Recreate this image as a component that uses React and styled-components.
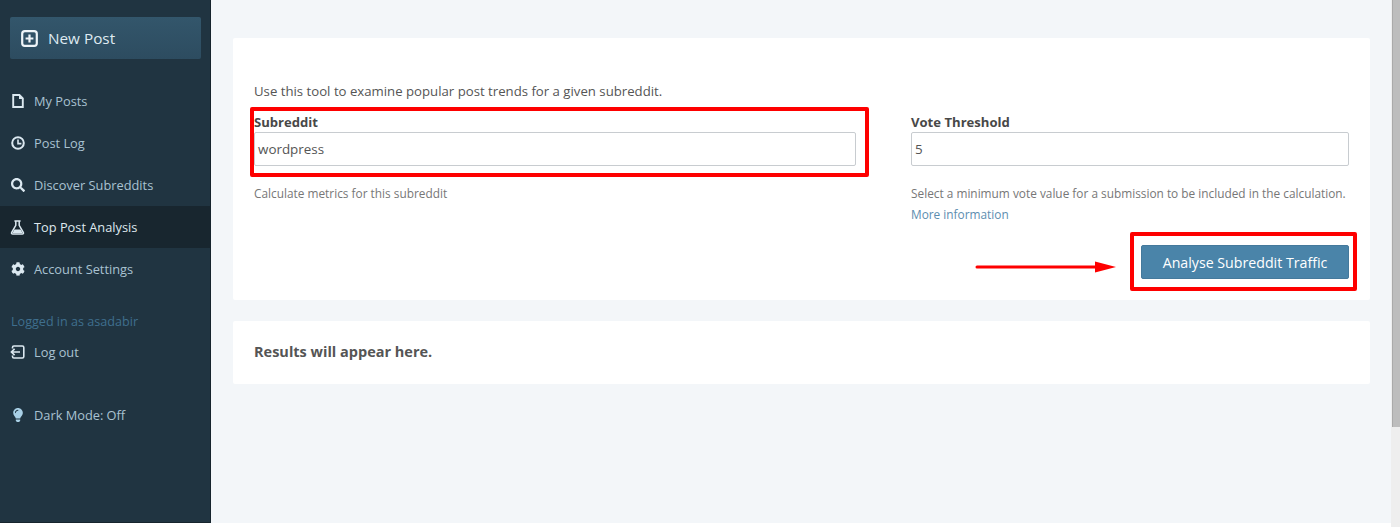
import React from 'react';
import styled, { createGlobalStyle } from 'styled-components';
import { FaSearch, FaCog, FaLightbulb } from 'react-icons/fa';

const GlobalStyle = createGlobalStyle`
  html, body {
    margin: 0;
    padding: 0;
    height: 100%;
    overflow: hidden;
    background: #fff;
  }
  body {
    font-family: "Open Sans", "Liberation Sans", sans-serif;
    font-size: 13px;
    color: #555;
  }
`;

const Page = styled.div`
  position: relative;
  display: flex;
  width: 1400px;
  height: 523px;
  background: #f3f6f9;
`;

const Sidebar = styled.aside`
  width: 211px;
  flex: none;
  box-sizing: border-box;
  background: #203441;
  border-right: 1px solid #16242d;
  border-bottom: 1px solid #16242d;
  padding-top: 17px;
`;

const NewPost = styled.a`
  display: flex;
  align-items: center;
  gap: 10px;
  height: 42px;
  margin: 0 9px 21px 10px;
  padding-left: 11px;
  border-radius: 2px;
  background: linear-gradient(#33566b, #2d4c60);
  color: #dfeaf1;
  font-size: 15.3px;
  svg { color: #eef4f8; }
`;

const Nav = styled.nav`
  display: flex;
  flex-direction: column;
`;

const NavItem = styled.a`
  display: flex;
  align-items: center;
  height: 42px;
  padding-left: 10px;
  font-size: 12.8px;
  color: ${p => (p.$active ? '#dfe8ee' : '#a9c2d1')};
  background: ${p => (p.$active ? '#18262f' : 'transparent')};
`;

const IconSlot = styled.span`
  display: flex;
  justify-content: center;
  width: 15px;
  margin-right: 9px;
  font-size: 14px;
  color: ${p => p.$color || '#dbe8f0'};
`;

const LoggedIn = styled.div`
  margin: 22px 0 0 11px;
  font-size: 12.6px;
  line-height: 19px;
  color: #3f6f8e;
`;

const DarkRow = styled(NavItem)`
  margin-top: 21px;
`;

const Main = styled.main`
  flex: none;
  width: 1137px;
  display: flex;
  flex-direction: column;
  gap: 21px;
  padding: 38px 0 0 22px;
`;

const Card = styled.section`
  background: #fff;
  border-radius: 2px;
  padding: ${p => p.$padding};
`;

const Intro = styled.p`
  margin: 0 0 12px;
  font-size: 13.2px;
  line-height: 19px;
  color: #555;
`;

const Columns = styled.div`
  display: grid;
  grid-template-columns: 602px 438px;
  column-gap: 55px;
`;

const Field = styled.div`
  display: flex;
  flex-direction: column;
`;

const Label = styled.label`
  font-size: 13.1px;
  font-weight: 700;
  line-height: 19px;
  color: #484848;
`;

const Input = styled.div`
  box-sizing: border-box;
  height: 34px;
  padding: 0 3px;
  display: flex;
  align-items: center;
  background: #fff;
  border: 1px solid #c8ccd0;
  border-radius: 2px;
  font-size: 13.4px;
  color: #555;
`;

const Help = styled.p`
  margin: 17px 0 0;
  font-size: 11.85px;
  line-height: 21px;
  white-space: nowrap;
  color: #777;
`;

const InfoLink = styled.a`
  display: block;
  color: #5d8eb0;
`;

const Actions = styled.div`
  display: flex;
  justify-content: flex-end;
  margin-top: 20px;
`;

const Button = styled.button`
  width: 208px;
  height: 34px;
  padding: 0;
  border: 1px solid #44799c;
  border-radius: 2px;
  background: #4a84a9;
  color: #fff;
  font-family: inherit;
  font-size: 14.2px;
  font-weight: 500;
`;

const Results = styled.h3`
  margin: 0;
  font-size: 14.5px;
  line-height: 19px;
  font-weight: 700;
  color: #555;
`;

const RedBox = styled.div`
  position: absolute;
  box-sizing: border-box;
  left: ${p => p.$x}px;
  top: ${p => p.$y}px;
  width: ${p => p.$w}px;
  height: ${p => p.$h}px;
  border: 4px solid #fe0000;
  border-radius: 2px;
  pointer-events: none;
`;

const Arrow = styled.svg`
  position: absolute;
  left: 975px;
  top: 259px;
`;

const Scrollbar = styled.div`
  position: absolute;
  top: 0;
  right: 0;
  bottom: -4px;
  width: 9px;
  background: #eee;
`;

const ScrollThumb = styled.div`
  height: 427px;
  margin-left: 1px;
  background: #bdbdbd;
  border-left: 1px solid #aaa;
  box-sizing: border-box;
`;

const PlusBoxIcon = () => (
  <svg width="17" height="17" viewBox="0 0 17 17">
    <rect x="1.2" y="1.2" width="14.6" height="14.6" rx="2.6" fill="none" stroke="currentColor" strokeWidth="2.2" />
    <path d="M8.5 4.6v7.8M4.6 8.5h7.8" stroke="currentColor" strokeWidth="2.2" />
  </svg>
);

const FileIcon = () => (
  <svg width="12" height="14" viewBox="0 0 12 14">
    <path d="M1.2 1H7.4L10.8 4.4V13H1.2Z" fill="none" stroke="currentColor" strokeWidth="1.9" />
    <path d="M7 1V5H11Z" fill="currentColor" />
  </svg>
);

const ClockIcon = () => (
  <svg width="14" height="14" viewBox="0 0 14 14">
    <circle cx="7" cy="7" r="5.8" fill="none" stroke="currentColor" strokeWidth="2" />
    <path d="M7 3.4V7.6H10.4" fill="none" stroke="currentColor" strokeWidth="1.6" />
  </svg>
);

const FlaskIcon = () => (
  <svg width="15" height="15" viewBox="0 0 15 15">
    <path d="M4.4 1H10.6M5.8 1V5.4L1.6 12.6Q1.2 14 2.6 14H12.4Q13.8 14 13.4 12.6L9.2 5.4V1" fill="none" stroke="currentColor" strokeWidth="1.5" />
    <path d="M4.4 9.4H10.6L12.6 13H2.4Z" fill="currentColor" />
  </svg>
);

const LogoutIcon = () => (
  <svg width="15" height="14" viewBox="0 0 15 14">
    <path d="M2.5 3.6V2.4Q2.5 1 3.9 1H12.4Q13.8 1 13.8 2.4V11.6Q13.8 13 12.4 13H3.9Q2.5 13 2.5 11.6V10.4" fill="none" stroke="currentColor" strokeWidth="1.6" />
    <path d="M1.4 7H10M4.6 3.9L1.4 7L4.6 10.1" fill="none" stroke="currentColor" strokeWidth="1.6" />
  </svg>
);

const items = [
  { label: 'My Posts', icon: <FileIcon /> },
  { label: 'Post Log', icon: <ClockIcon /> },
  { label: 'Discover Subreddits', icon: <FaSearch /> },
  { label: 'Top Post Analysis', icon: <FlaskIcon />, active: true },
  { label: 'Account Settings', icon: <FaCog /> },
];

export default function App() {
  return (
    <>
      <GlobalStyle />
      <Page>
        <Sidebar>
          <NewPost>
            <PlusBoxIcon />
            New Post
          </NewPost>
          <Nav>
            {items.map(item => (
              <NavItem key={item.label} $active={item.active}>
                <IconSlot>{item.icon}</IconSlot>
                {item.label}
              </NavItem>
            ))}
          </Nav>
          <LoggedIn>Logged in as asadabir</LoggedIn>
          <NavItem>
            <IconSlot><LogoutIcon /></IconSlot>
            Log out
          </NavItem>
          <DarkRow>
            <IconSlot $color="#a9d0e6"><FaLightbulb /></IconSlot>
            Dark Mode: Off
          </DarkRow>
        </Sidebar>
        <Main>
          <Card $padding="44px 21px 21px">
            <Intro>Use this tool to examine popular post trends for a given subreddit.</Intro>
            <Columns>
              <Field>
                <Label>Subreddit</Label>
                <Input>wordpress</Input>
                <Help>Calculate metrics for this subreddit</Help>
              </Field>
              <Field>
                <Label>Vote Threshold</Label>
                <Input>5</Input>
                <Help>
                  Select a minimum vote value for a submission to be included in the calculation.
                  <InfoLink>More information</InfoLink>
                </Help>
                <Actions>
                  <Button>Analyse Subreddit Traffic</Button>
                </Actions>
              </Field>
            </Columns>
          </Card>
          <Card $padding="21px 21px 23px">
            <Results>Results will appear here.</Results>
          </Card>
        </Main>
        <RedBox $x={250} $y={107} $w={619} $h={70} />
        <RedBox $x={1130} $y={232} $w={227} $h={59} />
        <Arrow width="142" height="16" viewBox="0 0 142 16">
          <path d="M2 8H122" stroke="#fe0000" strokeWidth="3" strokeLinecap="round" />
          <path d="M120 2.5L141 8L120 13.5Z" fill="#fe0000" />
        </Arrow>
        <Scrollbar>
          <ScrollThumb />
        </Scrollbar>
      </Page>
    </>
  );
}
